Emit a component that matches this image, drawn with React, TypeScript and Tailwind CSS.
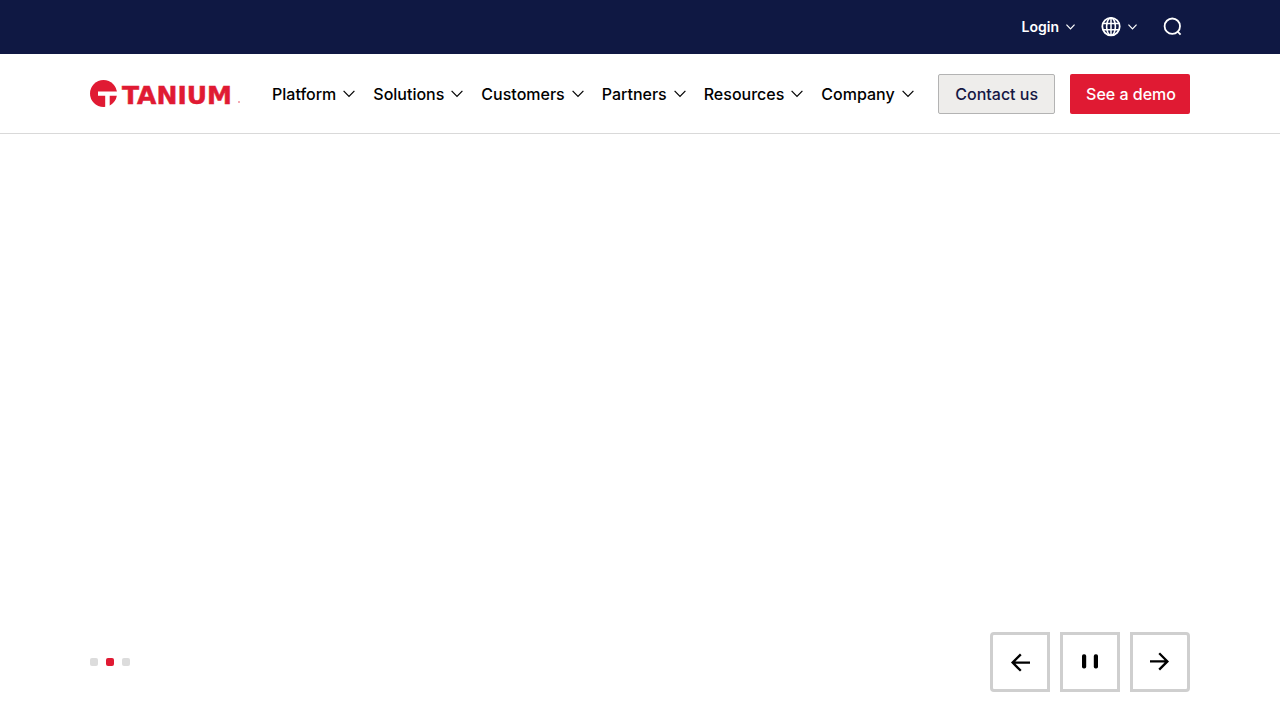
const navItems = ["Platform", "Solutions", "Customers", "Partners", "Resources", "Company"];

function Chevron({ className }: { className: string }) {
  return (
    <svg viewBox="0 0 12 8" className={className} fill="none" stroke="currentColor" aria-hidden="true">
      <path d="M0.6 0.9 6 6.4l5.4-5.5" />
    </svg>
  );
}

function Globe() {
  return (
    <svg viewBox="0 0 20 20" className="size-5" fill="none" stroke="currentColor" strokeWidth="1.8" aria-hidden="true">
      <circle cx="10" cy="9.6" r="8.7" />
      <ellipse cx="10" cy="9.6" rx="4.4" ry="8.7" strokeWidth="1.6" />
      <path d="M2 6.4h16M2 12.8h16M10 1v17.4" strokeWidth="1.5" />
    </svg>
  );
}

function Search() {
  return (
    <svg viewBox="0 0 20 20" className="size-5" fill="none" stroke="currentColor" strokeWidth="1.8" aria-hidden="true">
      <circle cx="10.3" cy="9.2" r="7.7" />
      <path d="m15.4 14.4 3.2 3.2" />
    </svg>
  );
}

function Logo() {
  return (
    <svg viewBox="0 0 150 28" className="h-7 w-[150px] shrink-0 overflow-visible" fill="#e01a33" role="img" aria-label="Tanium">
      <circle cx="13.5" cy="13.5" r="13.5" />
      <path d="M8 11.5h20v4.3h-8.3V28h-4.5V15.8H8z" fill="#fff" />
      <text x="32" y="24" fontSize="25" fontWeight="700" fontFamily="DejaVu Sans, sans-serif" stroke="#e01a33" strokeWidth="0.5">
        TANIUM
      </text>
      <circle cx="149" cy="22" r="0.7" />
    </svg>
  );
}

function Arrow({ className }: { className: string }) {
  return (
    <svg viewBox="0 0 20 20" className={className} fill="none" stroke="currentColor" strokeWidth="2.3" aria-hidden="true">
      <path d="M0 9.4h17M9.2 1.2l8.2 8.2-8.2 8.2" />
    </svg>
  );
}

export default function App() {
  return (
    <div className="flex min-h-screen flex-col bg-white font-['Inter',sans-serif] text-black">
      <div className="bg-[#0f1843] text-white">
        <div className="mx-auto flex h-[54px] max-w-[1100px] items-center justify-end pr-2">
          <button type="button" className="flex items-center gap-[7px] text-sm font-semibold">
            Login
            <Chevron className="h-[6px] w-[9px] stroke-[1.6]" />
          </button>
          <button type="button" aria-label="Language" className="ml-[26px] flex items-center gap-[7px]">
            <Globe />
            <Chevron className="h-[6px] w-[9px] stroke-[1.6]" />
          </button>
          <button type="button" aria-label="Search" className="ml-[25px]">
            <Search />
          </button>
        </div>
      </div>

      <header className="border-b border-[#d9d9d9]">
        <div className="mx-auto flex h-[79px] max-w-[1100px] items-center">
          <a href="#home" aria-label="Tanium home">
            <Logo />
          </a>
          <nav aria-label="Main" className="ml-8 flex gap-[18px]">
            {navItems.map((item) => (
              <button key={item} type="button" className="flex items-center gap-[7px] text-base font-medium">
                {item}
                <Chevron className="h-2 w-3 stroke-[1.2]" />
              </button>
            ))}
          </nav>
          <div className="ml-auto flex gap-[15px] font-medium">
            <a href="#contact" className="flex h-10 items-center rounded-xs border border-[#b3b3b3] bg-[#eeedeb] px-4 text-[#151744]">
              Contact us
            </a>
            <a href="#demo" className="flex h-10 items-center rounded-xs bg-[#e01a33] pr-[14px] pl-4 text-white">
              See a demo
            </a>
          </div>
        </div>
      </header>

      <main className="flex grow flex-col justify-end pb-7">
        <div className="mx-auto flex w-full max-w-[1100px] items-center justify-between">
          <div className="flex gap-2">
            <button type="button" aria-label="Slide 1" className="size-2 rounded-xs bg-[#dcdcdc]" />
            <button type="button" aria-label="Slide 2" aria-current="true" className="size-2 rounded-xs bg-[#e01a33]" />
            <button type="button" aria-label="Slide 3" className="size-2 rounded-xs bg-[#dcdcdc]" />
          </div>
          <div className="flex gap-[10px]">
            <button type="button" aria-label="Previous slide" className="flex size-[60px] items-center justify-center rounded-l-sm border-3 border-[#cfcfcf]">
              <Arrow className="size-5 rotate-180" />
            </button>
            <button type="button" aria-label="Pause" className="flex size-[60px] items-center justify-center border-3 border-[#cfcfcf]">
              <svg viewBox="0 0 20 20" className="size-5" aria-hidden="true">
                <rect x="2" y="2.3" width="4.2" height="14.2" rx="1.8" />
                <rect x="13.8" y="2.3" width="4.2" height="14.2" rx="1.8" />
              </svg>
            </button>
            <button type="button" aria-label="Next slide" className="flex size-[60px] items-center justify-center rounded-r-sm border-3 border-[#cfcfcf]">
              <Arrow className="size-5" />
            </button>
          </div>
        </div>
      </main>
    </div>
  );
}
